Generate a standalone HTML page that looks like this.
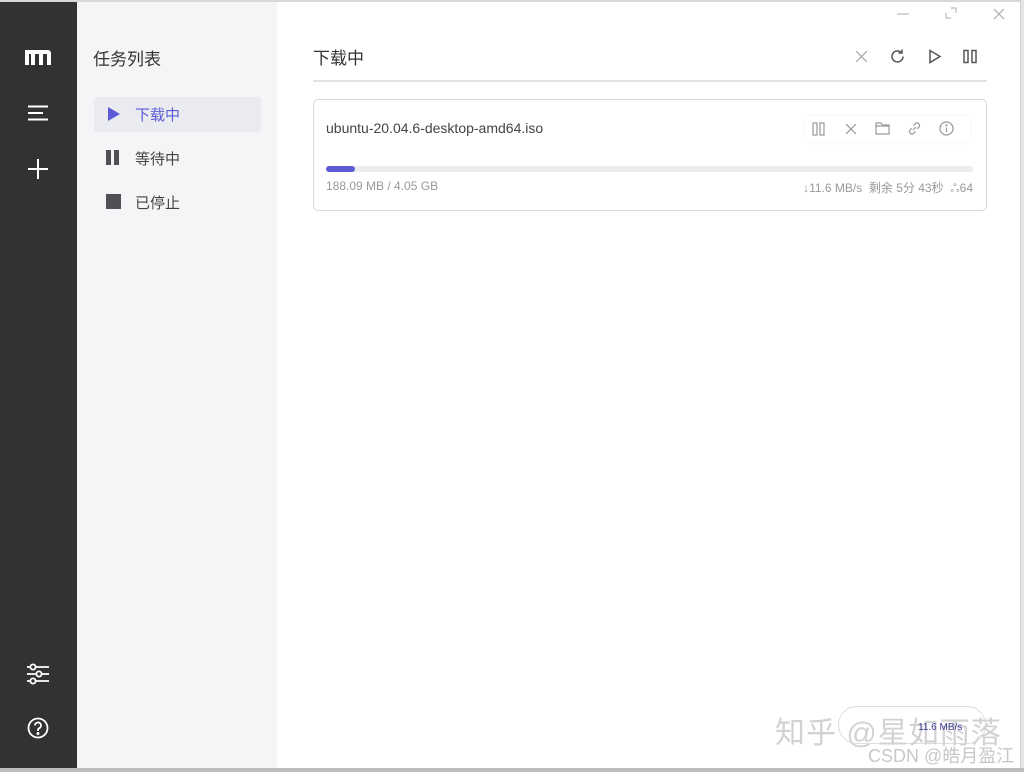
<!DOCTYPE html>
<html><head><meta charset="utf-8"><style>
*{margin:0;padding:0;box-sizing:border-box}
body{width:1024px;height:772px;overflow:hidden;background:#fff;font-family:"Liberation Sans","Noto Sans CJK SC",sans-serif;position:relative}
.top{position:absolute;left:0;top:0;width:1024px;height:2px;background:#d8d8d8}
.bot{position:absolute;left:0;top:768px;width:1024px;height:4px;background:#bdbdbd}
.rb{position:absolute;left:1020px;top:0;width:4px;height:772px;background:#e6e6e6;border-left:1px solid #cfcfcf}
.side{position:absolute;left:0;top:2px;width:77px;height:766px;background:#323232}
.nav{position:absolute;left:77px;top:2px;width:200px;height:766px;background:#f4f5f7}
.ic{position:absolute}
.t{position:absolute;white-space:nowrap}
</style></head><body>
<div class="top"></div>
<div class="side">
<svg class="ic" style="left:24px;top:47px" width="28" height="16" viewBox="0 0 28 16"><path d="M1 1h23a3 3 0 0 1 3 3v12h-4V5h-4v11h-4V5h-4v11H7V5H5v11H1z" fill="#fff"/></svg>
<svg class="ic" style="left:28px;top:103px" width="20" height="16"><path d="M0 1.5h20M0 8h15M0 14.5h20" stroke="#fff" stroke-width="2"/></svg>
<svg class="ic" style="left:28px;top:157px" width="20" height="20"><path d="M10 0v20M0 10h20" stroke="#fff" stroke-width="2"/></svg>
<svg class="ic" style="left:27px;top:661px" width="22" height="22" fill="none" stroke="#fff" stroke-width="1.8"><path d="M0 4h3M9 4h13M0 11h9M15 11h7M0 18h3M9 18h13"/><circle cx="6" cy="4" r="2.6"/><circle cx="12" cy="11" r="2.6"/><circle cx="6" cy="18" r="2.6"/></svg>
<svg class="ic" style="left:27px;top:715px" width="22" height="22" fill="none" stroke="#fff" stroke-width="1.8"><circle cx="11" cy="11" r="9.5"/><path d="M8 8.5a3 3 0 1 1 4.2 2.7c-.9.5-1.2 1-1.2 2v.8"/><circle cx="11" cy="16.5" r=".6" fill="#fff"/></svg>
</div>
<div class="nav">
<div class="t" style="left:16px;top:43px;font-size:17px;color:#333">任务列表</div>
<div style="position:absolute;left:17px;top:95px;width:167px;height:35px;background:#eaebf0;border-radius:3px"></div>
<svg class="ic" style="left:30px;top:105px" width="14" height="14"><path d="M1 0L13 7L1 14z" fill="#5b5bd6"/></svg>
<div class="t" style="left:58px;top:102px;font-size:15px;color:#5b5bd6">下载中</div>
<svg class="ic" style="left:29px;top:148px" width="14" height="15"><rect x="0" y="0" width="5" height="15" fill="#505057"/><rect x="8" y="0" width="5" height="15" fill="#505057"/></svg>
<div class="t" style="left:58px;top:146px;font-size:15px;color:#444">等待中</div>
<svg class="ic" style="left:29px;top:192px" width="15" height="15"><rect width="15" height="15" fill="#505057"/></svg>
<div class="t" style="left:58px;top:190px;font-size:15px;color:#444">已停止</div>
</div>
<svg class="ic" style="left:897px;top:8px" width="12" height="12"><path d="M0 6h12" stroke="#bbb" stroke-width="1.2"/></svg>
<svg class="ic" style="left:945px;top:7px" width="12" height="12" fill="none" stroke="#bbb" stroke-width="1.2"><path d="M6 1h5v5M1 6v5h5"/></svg>
<svg class="ic" style="left:993px;top:8px" width="12" height="12"><path d="M1 1l10 10M11 1L1 11" stroke="#aaa" stroke-width="1.2"/></svg>
<div class="t" style="left:313px;top:44px;font-size:17px;color:#333">下载中</div>
<svg class="ic" style="left:856px;top:51px" width="11" height="11"><path d="M0 0l11 11M11 0L0 11" stroke="#aaa" stroke-width="1.3"/></svg>
<svg class="ic" style="left:890px;top:49px" width="15" height="15" fill="none" stroke="#555" stroke-width="1.5"><path d="M13 7.5A5.5 5.5 0 1 1 11.2 3.4"/><path d="M12 0.5v3.5h-3.5"/></svg>
<svg class="ic" style="left:928px;top:49px" width="14" height="15" fill="none" stroke="#555" stroke-width="1.5"><path d="M2 1.5l10 6-10 6z"/></svg>
<svg class="ic" style="left:963px;top:49px" width="15" height="15" fill="none" stroke="#555" stroke-width="1.5"><rect x="1" y="1.5" width="4" height="12"/><rect x="9" y="1.5" width="4" height="12"/></svg>
<div style="position:absolute;left:313px;top:80px;width:674px;height:2px;background:#e3e3e3"></div>
<div style="position:absolute;left:313px;top:99px;width:674px;height:112px;border:1px solid #d9d9d9;border-radius:5px"></div>
<div class="t" style="left:326px;top:120px;font-size:14px;color:#444">ubuntu-20.04.6-desktop-amd64.iso</div>
<div style="position:absolute;left:805px;top:116px;width:165px;height:26px;border-radius:4px;box-shadow:0 0 3px rgba(0,0,0,.06)"></div>
<svg class="ic" style="left:812px;top:122px" width="14" height="14" fill="none" stroke="#999" stroke-width="1.2"><rect x="1" y="1" width="4" height="12"/><rect x="8" y="1" width="4" height="12"/></svg>
<svg class="ic" style="left:846px;top:124px" width="10" height="10"><path d="M0 0l10 10M10 0L0 10" stroke="#999" stroke-width="1.2"/></svg>
<svg class="ic" style="left:875px;top:122px" width="15" height="13" fill="none" stroke="#999" stroke-width="1.2"><path d="M1 1h5l1.5 2H14v9H1zM1 4h13"/></svg>
<svg class="ic" style="left:907px;top:121px" width="15" height="15" fill="none" stroke="#999" stroke-width="1.2"><path d="M6 9l3-3M5 7L3 9a2.5 2.5 0 0 0 3.5 3.5L8.5 10.5M10 8l2-2A2.5 2.5 0 0 0 8.5 2.5L6.5 4.5"/></svg>
<svg class="ic" style="left:939px;top:121px" width="15" height="15" fill="none" stroke="#999" stroke-width="1.2"><circle cx="7.5" cy="7.5" r="6.5"/><path d="M7.5 6.5v4.5"/><circle cx="7.5" cy="4.3" r=".5" fill="#999"/></svg>
<div style="position:absolute;left:326px;top:166px;width:647px;height:6px;background:#ebebf0;border-radius:3px"></div>
<div style="position:absolute;left:326px;top:166px;width:29px;height:6px;background:#5b5bd6;border-radius:3px"></div>
<div class="t" style="left:326px;top:179px;font-size:12px;color:#999">188.09 MB / 4.05 GB</div>
<div class="t" style="right:51px;top:179px;font-size:12px;color:#999">↓11.6 MB/s&nbsp; 剩余 5分 43秒&nbsp; ஃ64</div>
<div style="position:absolute;left:838px;top:706px;width:148px;height:38px;border:1px solid #ddd;border-radius:19px;background:rgba(255,255,255,.6)"></div>
<div class="t" style="left:775px;top:708px;font-size:30px;color:#d2d2d2;letter-spacing:1px">知乎 @星如雨落</div>
<div class="t" style="left:918px;top:722px;font-size:10px;color:#3d3d9a">11.6 MB/s</div>
<div class="t" style="left:868px;top:742px;font-size:18px;color:#c8c8c8">CSDN @皓月盈江</div>
<div class="rb"></div>
<div class="bot"></div>
</body></html>
